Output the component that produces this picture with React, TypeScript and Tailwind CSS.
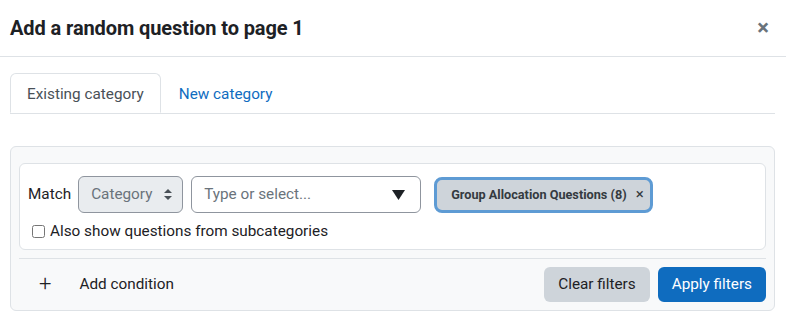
import { useState } from "react";

const App = () => {
    const [tab, setTab] = useState(0);
    const [sub, setSub] = useState(false);

    return (
    <div className="w-[786px] h-[318px] bg-white text-[15.3px] text-[#1d2125] font-['Roboto',sans-serif] overflow-hidden">
        <div className="flex flex-row items-center justify-between h-[57px] px-[10px] border-b border-[#dee2e6]">
            <h5 className="text-[20px] font-bold tracking-[-0.1px]">Add a random question to page 1</h5>
            <button className="text-[#6a737b] text-[22px] leading-none font-bold mr-[7px] mt-[-1px]">×</button>
        </div>

        <div className="px-[10px] pt-[16px]">
            <div className="flex flex-row border-b border-[#dee2e6] w-[765px]">
                <button
                    onClick={() => setTab(0)}
                    className={tab === 0
                        ? "h-[40px] px-[16px] pt-[3px] mb-[-1px] bg-white border border-[#dee2e6] border-b-white rounded-t-[6px] text-[#495057]"
                        : "h-[40px] px-[18px] pt-[3px] text-[#0f6cbf]"}
                >
                    Existing category
                </button>
                <button
                    onClick={() => setTab(1)}
                    className={tab === 1
                        ? "h-[40px] px-[16px] pt-[3px] mb-[-1px] bg-white border border-[#dee2e6] border-b-white rounded-t-[6px] text-[#495057]"
                        : "h-[40px] px-[18px] pt-[3px] text-[#0f6cbf]"}
                >
                    New category
                </button>
            </div>

            <div className="mt-[32px] w-[765px] bg-[#f8f9fa] border border-[#dee2e6] rounded-[6px] px-[8px] pt-[16px] pb-[8px]">
                <div className="bg-white border border-[#dee2e6] rounded-[6px] px-[8px] pt-[12px] pb-[6px]">
                    <div className="flex flex-row items-center">
                        <span className="mr-[7px]">Match</span>
                        <div className="flex flex-row items-center h-[37px] w-[105px] pl-[12px] pr-[10px] justify-between bg-[#e9ecef] border border-[#8f959e] rounded-[6px] text-[#6a737b]">
                            <span>Category</span>
                            <svg width="8" height="11" viewBox="0 0 8 11">
                                <path d="M4 0 L8 4 L0 4 Z M0 7 L8 7 L4 11 Z" fill="#495057" />
                            </svg>
                        </div>
                        <div className="flex flex-row items-center justify-between ml-[8px] h-[37px] w-[230px] pl-[12px] pr-[15px] border border-[#8f959e] rounded-[6px] text-[#6a737b]">
                            <span>Type or select...</span>
                            <svg width="13" height="10" viewBox="0 0 13 10">
                                <path d="M0 0 L13 0 L6.5 10 Z" fill="#1d2125" />
                            </svg>
                        </div>
                        <div className="flex flex-row items-center ml-[13px] h-[36px] pl-[14px] pr-[6px] bg-[#ced4da] border-[3px] border-[#5e9bd4] rounded-[8px] text-[12.7px] font-bold text-[#343a40]">
                            <span>Group Allocation Questions (8)</span>
                            <span className="ml-[9px] text-[15px] font-normal">×</span>
                        </div>
                    </div>
                    <label className="flex flex-row items-center mt-[7px] ml-[4px]">
                        <input
                            type="checkbox"
                            checked={sub}
                            onChange={() => setSub(!sub)}
                            className="w-[13px] h-[13px] mr-[5px]"
                        />
                        <span>Also show questions from subcategories</span>
                    </label>
                </div>

                <div className="flex flex-row items-center justify-between mt-[8px] pt-[8px] border-t border-[#dee2e6]">
                    <div className="flex flex-row items-center">
                        <span className="ml-[20px] text-[22px] leading-none font-light">+</span>
                        <span className="ml-[28px]">Add condition</span>
                    </div>
                    <div className="flex flex-row gap-[8px]">
                        <button className="h-[35px] px-[14px] bg-[#ced4da] rounded-[6px] text-[#1d2125]">Clear filters</button>
                        <button className="h-[35px] px-[14px] bg-[#0f6cbf] rounded-[6px] text-white">Apply filters</button>
                    </div>
                </div>
            </div>
        </div>
    </div>
    );
};

export default App;
